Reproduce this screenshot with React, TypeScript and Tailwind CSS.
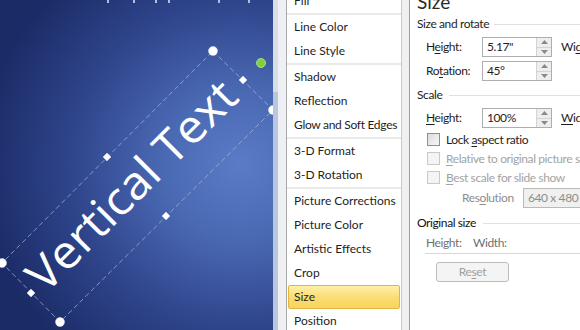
import React from "react";

function Slide() {
  const specks = [107, 133, 155, 168, 218, 248];
  const corners: [number, number][] = [
    [213, 51],
    [273, 110],
    [60, 322],
    [2, 263],
  ];
  const diamonds: [number, number][] = [
    [107, 157],
    [243, 80],
    [166, 216],
    [31, 293],
  ];
  return (
    <div className="relative h-full w-[273px] shrink-0 overflow-hidden bg-[radial-gradient(ellipse_95%_75%_at_88%_50%,#5a7bc6_0%,#4a69b3_30%,#2f458c_65%,#1b2b66_100%)]">
      <svg className="absolute inset-0" width="273" height="330" viewBox="0 0 273 330">
        {specks.map((x) => (
          <rect key={x} x={x} y={0} width={2} height={3} fill="#c9d5f2" opacity={0.85} />
        ))}
        <polygon
          points="213,51 273,110 60,322 2,263"
          fill="none"
          stroke="#a9b9e2"
          strokeWidth={1}
          strokeDasharray="5 3"
          opacity={0.7}
        />
        <text
          x={143}
          y={197}
          transform="rotate(-45 143 197)"
          textAnchor="middle"
          fill="#ffffff"
          fontFamily="'Open Sans', Lato, sans-serif"
          fontSize={46}
          textLength={276}
          lengthAdjust="spacingAndGlyphs"
        >
          Vertical Text
        </text>
        {diamonds.map(([x, y]) => (
          <polygon
            key={`${x}-${y}`}
            points={`${x},${y - 4} ${x + 4},${y} ${x},${y + 4} ${x - 4},${y}`}
            fill="#ffffff"
            stroke="#d7dff2"
            strokeWidth={0.5}
          />
        ))}
        {corners.map(([x, y]) => (
          <circle key={`${x}-${y}`} cx={x} cy={y} r={4.5} fill="#ffffff" stroke="#dfe6f5" strokeWidth={0.5} />
        ))}
        <circle cx={261} cy={63} r={4.5} fill="#7fd13a" stroke="#b9e79a" strokeWidth={0.8} />
      </svg>
    </div>
  );
}

function ListItem({ label }: { label: string }) {
  return <div className="flex h-[24px] items-center whitespace-nowrap pl-[7px]">{label}</div>;
}

function Sep() {
  return <div className="h-[2px] bg-[#e9e9e9]" />;
}

function List() {
  return (
    <div className="h-full w-[116px] shrink-0 overflow-hidden border-l border-r border-l-[#a9a9a9] border-r-[#c9c9c9] bg-white">
      <div className="-mt-[11px] flex flex-col">
        <ListItem label="Fill" />
        <Sep />
        <ListItem label="Line Color" />
        <ListItem label="Line Style" />
        <Sep />
        <ListItem label="Shadow" />
        <ListItem label="Reflection" />
        <div className="flex h-[24px] items-center whitespace-nowrap pl-[7px] tracking-[-0.3px]">Glow and Soft Edges</div>
        <Sep />
        <ListItem label="3-D Format" />
        <ListItem label="3-D Rotation" />
        <Sep />
        <ListItem label="Picture Corrections" />
        <ListItem label="Picture Color" />
        <ListItem label="Artistic Effects" />
        <ListItem label="Crop" />
        <div className="mx-[1px] flex h-[24px] items-center rounded-[2px] border border-[#e2b443] bg-[linear-gradient(#fef0a6,#fbdc72_55%,#f8d45a)] pl-[5px]">
          Size
        </div>
        <ListItem label="Position" />
      </div>
    </div>
  );
}

function Spinner() {
  return (
    <div className="flex w-[15px] flex-col border-l border-[#d4d4d4] bg-[#eeeeee]">
      <div className="flex flex-1 items-center justify-center border-b border-[#d4d4d4]">
        <svg width="7" height="4" viewBox="0 0 7 4">
          <polygon points="3.5,0 7,4 0,4" fill="#8a8a8a" />
        </svg>
      </div>
      <div className="flex flex-1 items-center justify-center">
        <svg width="7" height="4" viewBox="0 0 7 4">
          <polygon points="0,0 7,0 3.5,4" fill="#8a8a8a" />
        </svg>
      </div>
    </div>
  );
}

function Input({ value }: { value: string }) {
  return (
    <div className="flex h-[20px] w-[70px] shrink-0 border border-[#abadb3] bg-white">
      <div className="flex flex-1 items-center pl-[4px]">{value}</div>
      <Spinner />
    </div>
  );
}

function Check({ disabled }: { disabled?: boolean }) {
  return disabled ? (
    <div className="h-[13px] w-[13px] shrink-0 border border-[#c9c9c9] bg-[#f4f4f4]" />
  ) : (
    <div className="h-[13px] w-[13px] shrink-0 border border-[#8e8f8f] bg-[linear-gradient(135deg,#dcdcdc,#f7f7f7)]" />
  );
}

function RightPanel() {
  return (
    <div className="flex h-full min-w-0 flex-1 flex-col overflow-hidden whitespace-nowrap bg-white pl-[7px] tracking-[-0.4px]">
      <div className="-mt-[10px] h-[24px] text-[19px] leading-[24px] tracking-normal text-[#2b2b2b]">Size</div>

      <div className="flex h-[20px] items-center gap-[5px]">
        <span className="shrink-0">Size and rotate</span>
        <div className="h-px flex-1 bg-[#dde0e4]" />
      </div>

      <div className="mt-[3px] flex h-[20px] items-center">
        <span className="ml-[9px] w-[56px] shrink-0">
          H<u className="underline-offset-[2px]">e</u>ight:
        </span>
        <Input value={'5.17"'} />
        <span className="ml-[9px] shrink-0">
          Wi<u className="underline-offset-[2px]">d</u>th:
        </span>
      </div>

      <div className="mt-[4px] flex h-[20px] items-center">
        <span className="ml-[9px] w-[56px] shrink-0">
          Ro<u className="underline-offset-[2px]">t</u>ation:
        </span>
        <Input value="45°" />
      </div>

      <div className="mt-[4px] flex h-[20px] items-center gap-[7px]">
        <span className="shrink-0">Scale</span>
        <div className="h-px flex-1 bg-[#dde0e4]" />
      </div>

      <div className="mt-[3px] flex h-[20px] items-center">
        <span className="ml-[9px] w-[56px] shrink-0">
          <u className="underline-offset-[2px]">H</u>eight:
        </span>
        <Input value="100%" />
        <span className="ml-[9px] shrink-0">
          <u className="underline-offset-[2px]">W</u>idth:
        </span>
      </div>

      <div className="mt-[2px] flex h-[19px] items-center">
        <div className="ml-[10px] shrink-0">
          <Check />
        </div>
        <span className="ml-[6px] shrink-0">
          Lock <u className="underline-offset-[2px]">a</u>spect ratio
        </span>
      </div>
      <div className="flex h-[19px] items-center text-[#a3a3a3]">
        <div className="ml-[10px] shrink-0">
          <Check disabled />
        </div>
        <span className="ml-[6px] shrink-0">
          <u className="underline-offset-[2px]">R</u>elative to original picture size
        </span>
      </div>
      <div className="flex h-[19px] items-center text-[#a3a3a3]">
        <div className="ml-[10px] shrink-0">
          <Check disabled />
        </div>
        <span className="ml-[6px] shrink-0">
          <u className="underline-offset-[2px]">B</u>est scale for slide show
        </span>
      </div>

      <div className="mt-[1px] flex h-[20px] items-center text-[#8d8d8d]">
        <span className="ml-[45px] w-[61px] shrink-0">
          Res<u className="underline-offset-[2px]">o</u>lution
        </span>
        <div className="flex h-[20px] w-[80px] shrink-0 items-center border border-[#b9b9b9] bg-[#f0f0f0] pl-[4px] text-[#8d8d8d]">
          640 x 480
        </div>
      </div>

      <div className="mt-[5px] flex h-[20px] items-center gap-[7px] text-[#111]">
        <span className="shrink-0">Original size</span>
        <div className="h-px flex-1 bg-[#dde0e4]" />
      </div>

      <div className="ml-[8px] flex h-[21px] items-center border-b border-[#d6d8db] pl-[1px] text-[#707070]">
        <span className="w-[47px] shrink-0">Height:</span>
        <span className="shrink-0">Width:</span>
      </div>

      <div className="ml-[19px] mt-[8px] flex h-[20px] w-[73px] shrink-0 items-center justify-center rounded-[3px] border border-[#bcbcbc] bg-[#f4f4f4] text-[#a0a0a0]">
        Re<u className="underline-offset-[2px]">s</u>et
      </div>
    </div>
  );
}

export default function App() {
  return (
    <div className="flex h-[330px] w-[580px] overflow-hidden bg-white font-['Lato','Open_Sans',sans-serif] text-[12px] text-[#1e1e1e]">
      <Slide />
      <div className="flex h-full w-[5px] shrink-0 flex-col">
        <div className="h-[92px] bg-[#d8dee8]" />
        <div className="flex-1 bg-[#b9c6db]" />
      </div>
      <div className="h-full w-[8px] shrink-0 bg-[#eef0f4]" />
      <List />
      <div className="h-full w-[8px] shrink-0 border-r border-[#9c9c9c] bg-[#f0f0f0]" />
      <RightPanel />
    </div>
  );
}
